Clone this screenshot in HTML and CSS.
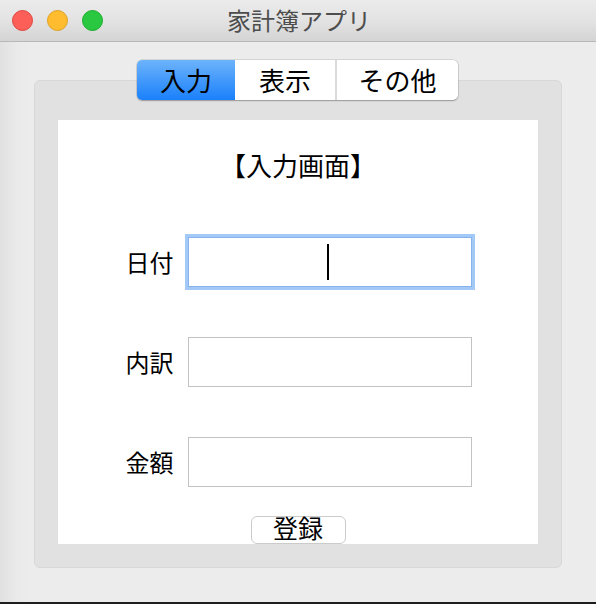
FILE: index.html
```html
<!DOCTYPE html>
<html lang="ja">
<head>
<meta charset="utf-8">
<title>家計簿アプリ</title>
<link rel="stylesheet" href="styles.css">
</head>
<body>
<div class="window">
  <header class="titlebar">
    <div class="lights">
      <span class="light red"></span>
      <span class="light yellow"></span>
      <span class="light green"></span>
    </div>
    <div class="title">家計簿アプリ</div>
    <div></div>
  </header>
  <main class="content">
    <div class="segmented">
      <div class="seg seg-input selected">入力</div>
      <div class="seg seg-show">表示</div>
      <div class="seg seg-other">その他</div>
    </div>
    <section class="groupbox">
      <div class="panel">
        <h1 class="heading">【入力画面】</h1>
        <div class="form">
          <div class="row">
            <label class="label">日付</label>
            <div class="field focused"><span class="caret"></span></div>
          </div>
          <div class="row">
            <label class="label">内訳</label>
            <div class="field"></div>
          </div>
          <div class="row">
            <label class="label">金額</label>
            <div class="field"></div>
          </div>
        </div>
        <button class="submit">登録</button>
      </div>
    </section>
  </main>
  <div class="bottom-edge"></div>
</div>
</body>
</html>
```
FILE: styles.css
```css
* { box-sizing: border-box; }
html, body {
  margin: 0;
  padding: 0;
}
body {
  width: 596px;
  height: 604px;
  overflow: hidden;
  font-family: "Noto Sans CJK JP", "Noto Sans", sans-serif;
  background: #ececec;
}
.window {
  display: flex;
  flex-direction: column;
  height: 604px;
  background: linear-gradient(to right, #e1e1e1 0, #eaeaea 18px, #ececec 30px);
}
.titlebar {
  height: 42px;
  flex: none;
  display: grid;
  grid-template-columns: 1fr auto 1fr;
  align-items: center;
  background: linear-gradient(to bottom, #ebebeb 0, #e3e3e3 50%, #d4d4d4 100%);
  border-bottom: 1px solid #b8b8b8;
}
.lights {
  display: flex;
  gap: 14px;
  padding-left: 12px;
  padding-bottom: 1px;
}
.light {
  width: 21px;
  height: 21px;
  border-radius: 50%;
  display: block;
}
.red { background: #fc5f57; border: 1px solid #e0443e; }
.yellow { background: #febc2e; border: 1px solid #dea123; }
.green { background: #29c840; border: 1px solid #1aab29; }
.title {
  font-size: 24px;
  line-height: 28px;
  color: #4d4d4d;
  padding-bottom: 2px;
  padding-left: 2px;
}
.content {
  flex: 1;
  padding: 18px 34px 0;
}
.segmented {
  position: relative;
  z-index: 1;
  display: flex;
  width: 321px;
  height: 40px;
  margin-left: 103px;
  background: #fff;
  border-radius: 5px;
  box-shadow: 0 0 0 0.5px rgba(0,0,0,0.18), 0 1px 1.5px rgba(0,0,0,0.25);
  overflow: hidden;
}
.seg {
  display: flex;
  align-items: center;
  justify-content: center;
  font-size: 26px;
  line-height: 30px;
  color: #000;
}
.seg-input { width: 98px; }
.seg-show { width: 100px; }
.seg-other { width: 123px; border-left: 2px solid #dadada; }
.selected {
  background: linear-gradient(to bottom, #6db3fb 0, #3f97fb 55%, #1a80fb 100%);
  color: #000;
}
.groupbox {
  width: 528px;
  height: 488px;
  margin-top: -20px;
  background: #e1e1e1;
  border: 1px solid #d8d8d8;
  border-radius: 6px;
  padding: 39px 23px 23px;
}
.panel {
  width: 480px;
  height: 424px;
  background: #fff;
  overflow: hidden;
  display: flex;
  flex-direction: column;
  align-items: center;
}
.heading {
  margin: 0;
  padding-top: 31px;
  font-size: 26px;
  line-height: 28px;
  font-weight: normal;
  color: #000;
}
.form {
  margin-top: 58px;
  display: flex;
  flex-direction: column;
  gap: 50px;
}
.row {
  display: flex;
  align-items: center;
  gap: 14px;
  padding-left: 1px;
}
.label {
  font-size: 24px;
  line-height: 50px;
  width: 48px;
  text-align: right;
  color: #000;
}
.field {
  width: 284px;
  height: 50px;
  background: #fff;
  border: 1px solid #c3c3c3;
  display: flex;
  align-items: center;
  justify-content: center;
}
.field.focused {
  border-color: #86b3ee;
  box-shadow: 0 0 0 3px #a3c9f6;
}
.caret {
  display: block;
  width: 2px;
  height: 36px;
  background: #000;
  margin-right: 4px;
}
.submit {
  margin-top: 29px;
  width: 95px;
  height: 40px;
  padding: 0;
  background: #fff;
  border: 1px solid #cbcbcb;
  border-radius: 6px;
  font-family: inherit;
  font-size: 25px;
  line-height: 20px;
  color: #000;
  display: flex;
  justify-content: center;
  align-items: flex-start;
}
.bottom-edge {
  height: 2px;
  flex: none;
  background: #1e1e1e;
}
```
